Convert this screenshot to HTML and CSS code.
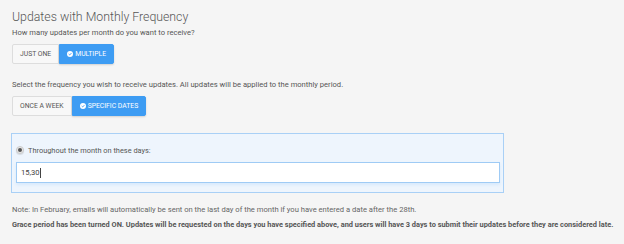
FILE: index.html
```html
<!DOCTYPE html>
<html>
<head>
<meta charset="utf-8">
<link rel="stylesheet" href="styles.css">
</head>
<body>
<div class="page">
  <h1 class="title">Updates with Monthly Frequency</h1>
  <p class="question">How many updates per month do you want to receive?</p>
  <div class="btn-group">
    <span class="btn">JUST ONE</span>
    <span class="btn active"><svg class="check" viewBox="0 0 10 10"><circle cx="5" cy="5" r="5" fill="#fff"/><path d="M2.8 5.1 L4.4 6.6 L7.3 3.6" fill="none" stroke="#3d9cf3" stroke-width="1.6"/></svg>MULTIPLE</span>
  </div>
  <p class="question q2">Select the frequency you wish to receive updates. All updates will be applied to the monthly period.</p>
  <div class="btn-group">
    <span class="btn">ONCE A WEEK</span>
    <span class="btn active"><svg class="check" viewBox="0 0 10 10"><circle cx="5" cy="5" r="5" fill="#fff"/><path d="M2.8 5.1 L4.4 6.6 L7.3 3.6" fill="none" stroke="#3d9cf3" stroke-width="1.6"/></svg>SPECIFIC DATES</span>
  </div>
  <div class="panel">
    <label class="radio-row"><span class="radio"><span class="dot"></span></span>Throughout the month on these days:</label>
    <div class="input">15,30<span class="caret"></span></div>
  </div>
  <p class="note">Note: In February, emails will automatically be sent on the last day of the month if you have entered a date after the 28th.</p>
  <p class="note bold">Grace period has been turned ON. Updates will be requested on the days you have specified above, and users will have 3 days to submit their updates before they are considered late.</p>
</div>
</body>
</html>
```
FILE: styles.css
```css
html, body {
  margin: 0;
  padding: 0;
  background: #f5f5f5;
}
body {
  font-family: Roboto, "Liberation Sans", sans-serif;
  color: #555;
}
.page {
  padding: 9px 12px 0 12px;
  width: 600px;
}
.title {
  margin: 0;
  font-size: 12.3px;
  font-weight: 300;
  color: #555;
  line-height: 16px;
}
.question {
  margin: 2px 0 0 0;
  font-size: 7.6px;
  line-height: 12px;
  color: #555;
}
.q2 {
  margin-top: 15px;
}
.btn-group {
  display: flex;
  margin-top: 5px;
}
.btn {
  display: flex;
  align-items: center;
  height: 20px;
  padding: 0 7px;
  font-size: 6.8px;
  color: #555;
  background: #f8f8f8;
  border: 1px solid #ddd;
  box-sizing: border-box;
  border-radius: 2px 0 0 2px;
}
.btn.active {
  background: #3d9cf3;
  border-color: #3d9cf3;
  color: #fff;
  border-radius: 0 2px 2px 0;
  box-shadow: 0 1px 2px rgba(0,0,0,0.15);
}
.check {
  width: 6px;
  height: 6px;
  margin-right: 2px;
  flex: none;
}
.panel {
  margin-top: 17px;
  margin-left: -1px;
  width: 493px;
  height: 60px;
  box-sizing: border-box;
  background: #eef5fd;
  border: 1px solid #a9d0f6;
  padding: 9px 3px 0 4px;
}
.radio-row {
  display: flex;
  align-items: center;
  font-size: 7.4px;
  color: #555;
  height: 14px;
}
.radio {
  width: 8px;
  height: 8px;
  border-radius: 50%;
  background: #e8e8e8;
  border: 1px solid #ccc;
  box-sizing: border-box;
  display: flex;
  align-items: center;
  justify-content: center;
  margin: 0 4px 0 0;
  box-shadow: 0 1px 1px rgba(0,0,0,0.1);
}
.dot {
  width: 4px;
  height: 4px;
  border-radius: 50%;
  background: #555;
}
.input {
  margin-top: 5px;
  height: 21px;
  box-sizing: border-box;
  background: #fff;
  border: 1px solid #9fcbf5;
  font-size: 7.6px;
  color: #444;
  padding: 0 4px;
  display: flex;
  align-items: center;
  box-shadow: 0 2px 3px rgba(61,156,243,0.12);
}
.caret {
  width: 1px;
  height: 10px;
  background: #444;
}
.note {
  margin: 12px 0 0 0;
  font-size: 7.6px;
  line-height: 10px;
  color: #666;
  white-space: nowrap;
}
.note.bold {
  margin-top: 5px;
  font-size: 7.4px;
  font-weight: bold;
  color: #555;
}
```
